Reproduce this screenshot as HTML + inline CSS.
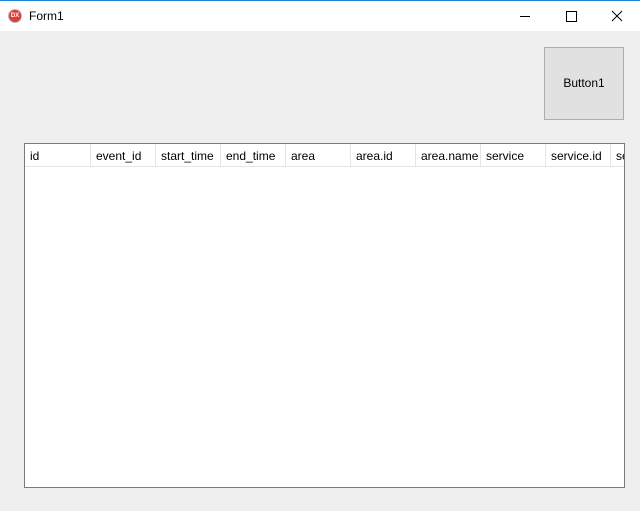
<!DOCTYPE html>
<html><head><meta charset="utf-8"><style>
body{margin:0;width:640px;height:511px;background:#efefef;font-family:"Liberation Sans",sans-serif;position:relative;overflow:hidden}
.title{position:absolute;left:0;top:0;width:640px;height:31px;background:#fff;border-top:1px solid #1883d7;box-sizing:border-box}
.title span{position:absolute;left:29px;top:8px;font-size:12px;color:#000}
.icon{position:absolute;left:8px;top:8px;width:14px;height:14px;border-radius:50%;background:#e03a3e;border:1px solid #b8b8b8;box-sizing:border-box;color:#fff;font-size:6px;font-weight:bold;text-align:center;line-height:12px}
.btn{position:absolute;left:544px;top:47px;width:80px;height:73px;background:#e1e1e1;border:1px solid #adadad;box-sizing:border-box;font-size:12px;text-align:center;line-height:71px}
.grid{position:absolute;left:24px;top:143px;width:601px;height:345px;border:1px solid #7a7a7a;box-sizing:border-box;background:#fff;overflow:hidden}
.hdr{position:absolute;left:0;top:0;height:22px;width:700px;border-bottom:1px solid #e5e5e5;white-space:nowrap}
.hdr div{display:inline-block;box-sizing:border-box;width:65px;height:22px;border-right:1px solid #e5e5e5;font-size:12px;line-height:24px;padding-left:5px;vertical-align:top}
.hdr div:first-child{width:66px}
</style></head><body>
<div class="title"><div class="icon">DX</div><span>Form1</span>
<svg style="position:absolute;left:515px;top:8px" width="110" height="14">
<line x1="5" y1="7.5" x2="15" y2="7.5" stroke="#000" stroke-width="1"/>
<rect x="51.5" y="2.5" width="10" height="10" fill="none" stroke="#000"/>
<line x1="97" y1="2" x2="107" y2="12" stroke="#000"/><line x1="107" y1="2" x2="97" y2="12" stroke="#000"/>
</svg></div>
<div class="btn">Button1</div>
<div class="grid"><div class="hdr"><div>id</div><div>event_id</div><div>start_time</div><div>end_time</div><div>area</div><div>area.id</div><div>area.name</div><div>service</div><div>service.id</div><div>service.name</div></div></div>
</body></html>
